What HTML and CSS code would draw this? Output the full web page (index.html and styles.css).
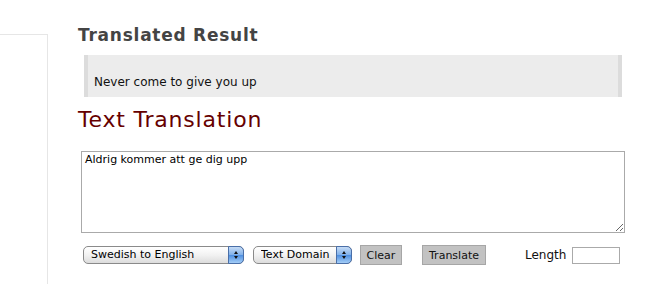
FILE: index.html
```html
<!DOCTYPE html>
<html>
<head>
<meta charset="utf-8">
<link rel="stylesheet" href="styles.css">
</head>
<body>
<div class="page">
  <aside class="sidebar"></aside>
  <main class="main">
    <h2 class="result-title">Translated Result</h2>
    <div class="result-box">Never come to give you up</div>
    <h1 class="tt-title">Text Translation</h1>
    <textarea class="source">Aldrig kommer att ge dig upp</textarea>
    <div class="controls">
      <label class="sel sel-lang">
        <select><option>Swedish to English</option></select>
        <span class="arrows"><span class="up"></span><span class="down"></span></span>
      </label>
      <label class="sel sel-domain">
        <select><option>Text Domain</option></select>
        <span class="arrows"><span class="up"></span><span class="down"></span></span>
      </label>
      <button class="btn btn-clear">Clear</button>
      <button class="btn btn-translate">Translate</button>
      <span class="len-label">Length</span>
      <input class="len" type="text">
    </div>
  </main>
</div>
</body>
</html>
```
FILE: styles.css
```css
* { box-sizing: border-box; }
html, body { margin: 0; padding: 0; background: #fff; }
body { font-family: "DejaVu Sans", "Lucida Grande", sans-serif; color: #111; }
.page { display: flex; height: 284px; overflow: hidden; }
.sidebar {
  width: 48px; margin-top: 34px; height: 260px;
  border-top: 1px solid #e6e6e6; border-right: 1px solid #e6e6e6;
  flex: none;
}
.main { margin-left: 30px; width: 560px; display: flex; flex-direction: column; }
.result-title {
  margin: 25px 0 0; font-size: 17px; line-height: 20px; font-weight: bold;
  letter-spacing: 0.75px; color: #444;
}
.result-box {
  margin: 10px 0 0 6px; width: 538px; height: 42px;
  background: #ececec; border-left: 4px solid #dcdcdc; border-right: 4px solid #dcdcdc;
  padding: 19px 0 0 6px; font-size: 12px; line-height: 16px; color: #111;
}
.tt-title {
  margin: 9px 0 0; font-size: 22px; line-height: 28px; font-weight: normal;
  letter-spacing: 0.8px; color: #660000;
}
.source {
  margin: 17px 0 0 3px; width: 544px; height: 82px; border: 1px solid #aaa;
  padding: 1px 3px; font-family: "DejaVu Sans", sans-serif; font-size: 11px; line-height: 14px;
  resize: both; color: #000;
}
.controls { display: flex; align-items: center; margin: 12px 0 0 5px; height: 20px; font-size: 11px; }
.sel { position: relative; display: block; height: 18px; }
.sel select {
  appearance: none; -webkit-appearance: none;
  height: 18px; width: 100%; border: 1px solid #8a8a8a; border-radius: 5px;
  background: linear-gradient(#ffffff, #f2f2f2 50%, #dcdcdc);
  font-family: "DejaVu Sans", sans-serif; font-size: 11px; color: #000;
  padding: 0 0 0 7px; line-height: 16px;
}
.sel-lang { width: 161px; }
.sel-domain { width: 99px; margin-left: 9px; }
.arrows {
  position: absolute; right: 0; top: 0; width: 16px; height: 18px;
  border: 1px solid #4a6fa8; border-radius: 0 5px 5px 0;
  background: linear-gradient(#c6dcf6, #7fb0ea 50%, #4d8ee0 51%, #a3cdf7);
  display: flex; flex-direction: column; align-items: center; justify-content: center; gap: 2px;
  pointer-events: none;
}
.up { width: 0; height: 0; border-left: 2.5px solid transparent; border-right: 2.5px solid transparent; border-bottom: 3px solid #111; }
.down { width: 0; height: 0; border-left: 2.5px solid transparent; border-right: 2.5px solid transparent; border-top: 3px solid #111; }
.btn {
  height: 20px; background: #c2c2c2; border: 1px solid #a6a6a6; border-radius: 0;
  font-family: "DejaVu Sans", sans-serif; font-size: 11px; color: #111; padding: 0;
}
.btn-clear { width: 42px; margin-left: 8px; }
.btn-translate { width: 64px; margin-left: 20px; }
.len-label { margin-left: 39px; font-size: 12px; color: #111; }
.len { width: 48px; height: 17px; margin-left: 6px; border: 1px solid #aaa; padding: 0; }
```
